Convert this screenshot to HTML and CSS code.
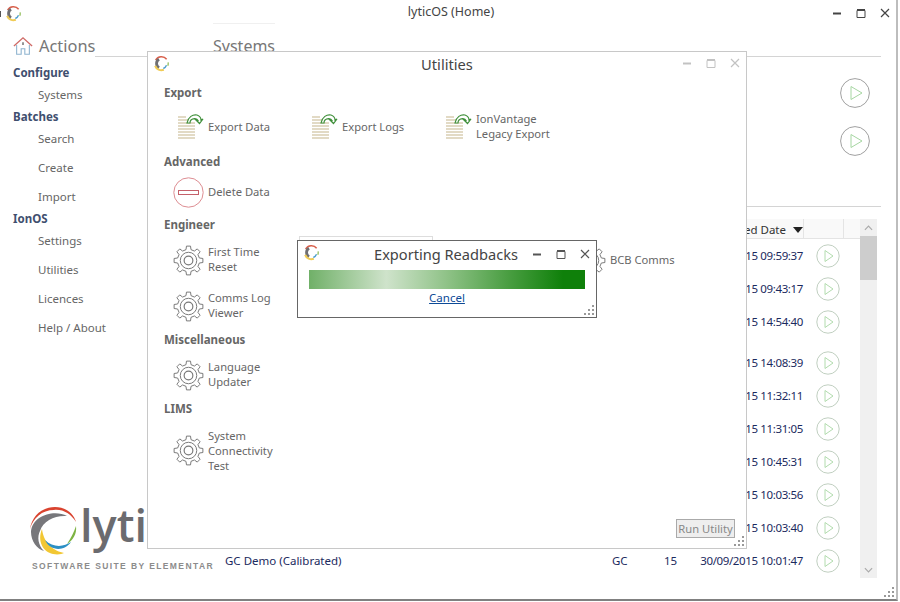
FILE: index.html
```html
<!DOCTYPE html>
<html lang="en">
<head>
<meta charset="utf-8">
<title>lyticOS (Home)</title>
<link rel="stylesheet" href="styles.css">
</head>
<body>
<svg class="defs" width="0" height="0" aria-hidden="true">
  <symbol id="logo" viewBox="0 0 48 48">
    <path fill="#d9432f" d="M1 22C3 8 14 0 26 0C37 0 45 7 47 15C42 7 34 2 25 3C13 3 4 11 1 22Z"/>
    <path fill="#77777b" d="M38 9C26 2 3 8 2 25C2 34 8 42 15 44C9 38 8 30 11 24C14 14 26 8 38 9Z"/>
    <path fill="#f2c733" d="M13 22C8 34 14 45 24 47C29 48 33 47 35 46C26 44 15 38 13 22Z"/>
    <path fill="#2b8fc4" d="M16 33C21 44 35 45 42 35C35 40 24 41 16 33Z"/>
    <path fill="#7db343" d="M47 19C48 27 44 33 38 37C42 31 45 25 47 19Z"/>
  </symbol>
  <symbol id="logo-s" viewBox="0 0 48 48">
    <g fill="none">
      <path stroke="#d8604c" stroke-width="4.5" d="M7.55 14.5A19 19 0 0 1 38.55 11.8"/>
      <path stroke="#6f6f72" stroke-width="8" d="M17 11.9A14 14 0 0 0 17 36.1"/>
      <path stroke="#f0cb55" stroke-width="6" d="M6.15 30.5A19 19 0 0 0 30.5 41.85"/>
      <path stroke="#4d9fcc" stroke-width="4" d="M29.1 38.1A15 15 0 0 0 38.1 29.1"/>
      <path stroke="#8dbb55" stroke-width="3.5" d="M41.85 30.5A19 19 0 0 0 42.7 20.7"/>
    </g>
  </symbol>
  <symbol id="gear" viewBox="0 0 32 32">
    <path fill="none" stroke="#777" stroke-width="1" d="M13.41 4.8L13.91 1.15H18.09L18.59 4.8L22.09 6.25L25.03 4.02L27.98 6.97L25.75 9.91L27.2 13.41L30.85 13.91V18.09L27.2 18.59L25.75 22.09L27.98 25.03L25.03 27.98L22.09 25.75L18.59 27.2L18.09 30.85H13.91L13.41 27.2L9.91 25.75L6.97 27.98L4.02 25.03L6.25 22.09L4.8 18.59L1.15 18.09V13.91L4.8 13.41L6.25 9.91L4.02 6.97L6.97 4.02L9.91 6.25Z"/>
    <circle cx="16" cy="16" r="8.5" fill="none" stroke="#777"/>
    <circle cx="16" cy="16" r="4.5" fill="none" stroke="#777" stroke-width="1.2"/>
  </symbol>
  <symbol id="doc" viewBox="0 0 27 26">
    <path stroke="#d9ceb2" stroke-width="1.4" d="M1 3H9M1 6H11M1 9H18M1 12H18M1 15H18M1 18H18M1 21H18M1 24H18"/>
    <path fill="#fff" stroke="#3f8f3a" stroke-width="1.2" d="M10 9C11 3 16 0 20 1C23 2 24 4 24 6L26 5L22.5 9.5L19 6L21 6.5C20 4 16 4 14 6C13 7 13 8 13 9Z"/>
  </symbol>
  <symbol id="grip" viewBox="0 0 11 11">
    <path fill="#999" d="M8 0h2v2H8zM4 4h2v2H4zM8 4h2v2H8zM0 8h2v2H0zM4 8h2v2H4zM8 8h2v2H8z"/>
  </symbol>
  <symbol id="play" viewBox="0 0 30 30">
    <circle cx="15" cy="15" r="14.4" fill="none" stroke="#a0a0a0"/>
    <path fill="none" stroke="#a6d6a2" d="M11 8.5L22 15L11 21.5Z"/>
  </symbol>
  <symbol id="playsm" viewBox="0 0 24 24">
    <circle cx="12" cy="12" r="11.2" fill="none" stroke="#c0cfc0"/>
    <path fill="none" stroke="#b2dcae" d="M9 6.5L17 12L9 17.5Z"/>
  </symbol>
  <symbol id="min" viewBox="0 0 10 10"><path d="M1 5.5H9" stroke="currentColor" stroke-width="2"/></symbol>
  <symbol id="max" viewBox="0 0 10 10"><path fill="none" stroke="currentColor" d="M1 2.5H9V9.5H1Z"/><path d="M1 1.5H9" stroke="currentColor"/></symbol>
  <symbol id="close" viewBox="0 0 10 10"><path fill="none" stroke="currentColor" stroke-width="1.2" d="M1 1L9 9M9 1L1 9"/></symbol>
</svg>

<div class="main">
  <header class="main-title">
    <span class="tick"></span>
    <svg class="logo-sm"><use href="#logo-s"/></svg>
    <h1>lyticOS (Home)</h1>
    <div class="controls main-controls">
      <svg><use href="#min"/></svg><svg><use href="#max"/></svg><svg><use href="#close"/></svg>
    </div>
  </header>
  <div class="main-body">
    <aside class="sidebar">
      <div class="actions-head">
        <svg class="home" viewBox="0 0 22 22">
          <path fill="none" stroke="#8fb4cf" stroke-width="1.2" d="M4 10V20H9V14H13V20H18V10"/>
          <path fill="none" stroke="#cf6a66" stroke-width="1.5" d="M1 11L11 2L21 11"/>
          <path fill="#8a8a8a" d="M10 7h2v3h-2z"/>
        </svg>
        <span class="actions-label">Actions</span>
        <span class="actions-rule"></span>
      </div>
      <nav class="nav">
        <div class="nav-group">Configure</div>
        <a class="nav-link">Systems</a>
        <div class="nav-group">Batches</div>
        <a class="nav-link">Search</a>
        <a class="nav-link">Create</a>
        <a class="nav-link">Import</a>
        <div class="nav-group">IonOS</div>
        <a class="nav-link">Settings</a>
        <a class="nav-link">Utilities</a>
        <a class="nav-link">Licences</a>
        <a class="nav-link">Help / About</a>
      </nav>
      <div class="brand">
        <div class="brand-row">
          <svg class="brand-logo"><use href="#logo"/></svg>
          <span class="brand-name">lyticOS</span>
        </div>
        <div class="brand-sub">SOFTWARE SUITE BY ELEMENTAR</div>
      </div>
    </aside>
    <section class="content">
      <div class="systems-head"><span class="systems-label">Systems</span></div>
      <div class="big-plays">
        <svg class="play-big"><use href="#play"/></svg>
        <svg class="play-big"><use href="#play"/></svg>
      </div>
      <div class="table-wrap">
        <div class="table">
          <div class="thead">
            <span></span><span></span><span></span>
            <span class="th-date">Created Date <i class="caret"></i></span>
            <span class="th-cell"></span><span></span>
          </div>
          <div class="row"><span></span><span></span><span></span><span class="date">30/09/2015 09:59:37</span><svg class="play-sm"><use href="#playsm"/></svg></div>
          <div class="row"><span></span><span></span><span></span><span class="date">30/09/2015 09:43:17</span><svg class="play-sm"><use href="#playsm"/></svg></div>
          <div class="row"><span></span><span></span><span></span><span class="date">29/09/2015 14:54:40</span><svg class="play-sm"><use href="#playsm"/></svg></div>
          <div class="row row-gap"><span></span><span></span><span></span><span class="date">29/09/2015 14:08:39</span><svg class="play-sm"><use href="#playsm"/></svg></div>
          <div class="row"><span></span><span></span><span></span><span class="date">30/09/2015 11:32:11</span><svg class="play-sm"><use href="#playsm"/></svg></div>
          <div class="row"><span></span><span></span><span></span><span class="date">30/09/2015 11:31:05</span><svg class="play-sm"><use href="#playsm"/></svg></div>
          <div class="row"><span></span><span></span><span></span><span class="date">30/09/2015 10:45:31</span><svg class="play-sm"><use href="#playsm"/></svg></div>
          <div class="row"><span></span><span></span><span></span><span class="date">30/09/2015 10:03:56</span><svg class="play-sm"><use href="#playsm"/></svg></div>
          <div class="row"><span></span><span></span><span></span><span class="date">30/09/2015 10:03:40</span><svg class="play-sm"><use href="#playsm"/></svg></div>
          <div class="row"><span>GC Demo (Calibrated)</span><span>GC</span><span>15</span><span class="date">30/09/2015 10:01:47</span><svg class="play-sm"><use href="#playsm"/></svg></div>
        </div>
        <div class="scrollbar">
          <svg class="arrow" viewBox="0 0 10 6"><path fill="none" stroke="#aaa" stroke-width="1.3" d="M1 5L5 1L9 5"/></svg>
          <div class="thumb"></div>
          <svg class="arrow arrow-down" viewBox="0 0 10 6"><path fill="none" stroke="#aaa" stroke-width="1.3" d="M1 1L5 5L9 1"/></svg>
        </div>
      </div>
    </section>
  </div>
  <svg class="grip"><use href="#grip"/></svg>
</div>

<div class="window utilities">
  <header class="util-title">
    <svg class="logo-sm"><use href="#logo-s"/></svg>
    <h2>Utilities</h2>
    <div class="controls util-controls">
      <svg><use href="#min"/></svg><svg><use href="#max"/></svg><svg><use href="#close"/></svg>
    </div>
  </header>
  <div class="util-body">
    <h3 class="h3-low">Export</h3>
    <div class="items">
      <div class="item"><svg class="doc"><use href="#doc"/></svg><span>Export Data</span></div>
      <div class="item"><svg class="doc"><use href="#doc"/></svg><span>Export Logs</span></div>
      <div class="item"><svg class="doc"><use href="#doc"/></svg><span>IonVantage<br>Legacy Export</span></div>
    </div>
    <h3 class="h3-low">Advanced</h3>
    <div class="items items-tight">
      <div class="item item-short">
        <svg class="icon" viewBox="0 0 31 31">
          <circle cx="15.5" cy="15.5" r="14.7" fill="none" stroke="#dd8d92"/>
          <rect x="5.5" y="13.5" width="20" height="4" fill="#fff" stroke="#c4606a"/>
        </svg>
        <span>Delete Data</span>
      </div>
    </div>
    <h3>Engineer</h3>
    <div class="items">
      <div class="item"><svg class="icon"><use href="#gear"/></svg><span>First Time<br>Reset</span></div>
      <div></div><div></div>
      <div class="item"><svg class="icon"><use href="#gear"/></svg><span>BCB Comms</span></div>
      <div class="item"><svg class="icon"><use href="#gear"/></svg><span>Comms Log<br>Viewer</span></div>
    </div>
    <h3>Miscellaneous</h3>
    <div class="items">
      <div class="item"><svg class="icon"><use href="#gear"/></svg><span>Language<br>Updater</span></div>
    </div>
    <h3>LIMS</h3>
    <div class="items">
      <div class="item item-tall"><svg class="icon"><use href="#gear"/></svg><span>System<br>Connectivity<br>Test</span></div>
    </div>
  </div>
  <div class="util-foot"><button class="run" type="button">Run Utility</button></div>
  <svg class="grip"><use href="#grip"/></svg>
</div>

<div class="ghost"><span class="ghost-handle"></span></div>

<div class="window dialog">
  <header class="dialog-title">
    <svg class="logo-sm"><use href="#logo-s"/></svg>
    <h2>Exporting Readbacks</h2>
    <div class="controls dialog-controls">
      <svg><use href="#min"/></svg><svg><use href="#max"/></svg><svg><use href="#close"/></svg>
    </div>
  </header>
  <div class="progress"></div>
  <a class="cancel" href="#">Cancel</a>
  <svg class="grip"><use href="#grip"/></svg>
</div>
</body>
</html>
```
FILE: styles.css
```css
* { box-sizing: border-box; }
html, body { margin: 0; padding: 0; height: 100%; background: #fff; overflow: hidden; }
body { font-family: "Noto Sans", "Open Sans", sans-serif; font-size: 11.5px; color: #555; }
.defs { position: absolute; }
h1, h2, h3 { margin: 0; font-weight: 400; }

.main { position: relative; width: 898px; height: 601px; border-right: 2px solid #bdbdbd; border-bottom: 2px solid #808080; display: flex; flex-direction: column; }
.main > .grip { position: absolute; right: 1px; bottom: 1px; }
.grip { width: 11px; height: 11px; }

.main-title { height: 23px; position: relative; flex: none; }
.main-title h1 { position: absolute; left: 0; right: 0; top: 3px; padding-left: 6px; text-align: center; font-size: 12.5px; line-height: 18px; color: #444; }
.tick { position: absolute; left: 0; top: 11px; width: 1px; height: 6px; background: #555; }
.logo-sm { position: absolute; width: 17px; height: 17px; }
.main-title .logo-sm { left: 5px; top: 5px; }

.controls { position: absolute; display: flex; }
.controls svg { width: 10px; height: 10px; }
.main-controls { right: 6px; top: 8px; gap: 14px; color: #444; }
.util-controls { right: 6px; top: 6px; gap: 14px; color: #c2c2c2; }
.dialog-controls { right: 6px; top: 8px; gap: 14px; color: #555; }

.main-body { flex: 1; display: flex; min-height: 0; }
.sidebar { width: 213px; flex: none; display: flex; flex-direction: column; }
.actions-head { height: 34px; display: flex; align-items: flex-end; padding-left: 13px; }
.home { width: 20px; height: 20px; margin-bottom: 1px; }
.actions-label { margin-left: 6px; font-size: 16.4px; line-height: 22px; color: #777; }
.actions-rule { flex: 1; border-bottom: 1px solid #d4d4d4; }
.nav { margin-top: 5px; }
.nav-group { height: 22px; line-height: 22px; padding-left: 13px; font-weight: 700; font-size: 11.5px; color: #3f4f6f; }
.nav-link { display: block; height: 22px; line-height: 22px; padding-left: 38px; color: #666; }
.nav-link + .nav-link { margin-top: 7px; }

.brand { margin-top: auto; padding: 0 0 28px 29px; }
.brand-row { display: flex; align-items: flex-start; height: 48px; white-space: nowrap; }
.brand-logo { width: 48px; height: 48px; flex: none; }
.brand-name { margin: -6px 0 0 3px; font-family: "Open Sans", sans-serif; font-weight: 600; font-size: 45px; line-height: 48px; color: #6b6b6f; }
.brand-sub { margin: 6px 0 0 3px; font-family: "Liberation Sans", sans-serif; font-weight: 700; font-size: 8.5px; letter-spacing: 1.4px; line-height: 10px; color: #8c8c8c; white-space: nowrap; }

.content { width: 668px; display: flex; flex-direction: column; }
.systems-head { height: 34px; border-bottom: 1px solid #d4d4d4; }
.systems-label { display: block; width: 62px; height: 34px; border-top: 1px solid #f0f0f0; font-size: 16px; line-height: 44px; color: #777; }
.big-plays { height: 150px; padding: 21px 11px 0 0; display: flex; flex-direction: column; align-items: flex-end; gap: 18px; border-bottom: 1px solid #d4d4d4; }
.play-big { width: 30px; height: 30px; flex: none; }

.table-wrap { display: flex; margin-top: 12px; height: 359px; }
.table { width: 647px; flex: none; }
.thead, .row { display: grid; grid-template-columns: 399px 52px 36px 103px 41px 16px; align-items: center; }
.thead { height: 20px; background: #f9f9f9; border-bottom: 1px solid #e4e4e4; color: #333; }
.th-date { padding-top: 1px; white-space: nowrap; text-align: right; }
.th-cell { height: 100%; border-left: 1px solid #e4e4e4; border-right: 1px solid #e4e4e4; }
.caret { display: inline-block; margin-left: 4px; border: 5px solid transparent; border-top: 6px solid #222; border-bottom: 0; vertical-align: 1px; }
.row { height: 33px; color: #1b2a5e; }
.row > span:first-child { padding-left: 12px; }
.row-gap { margin-top: 8px; }
.date { text-align: right; white-space: nowrap; letter-spacing: -0.37px; }
.play-sm { width: 24px; height: 24px; justify-self: end; margin-right: 4px; grid-column: 5; }

.scrollbar { width: 17px; background: #f0f0f0; display: flex; flex-direction: column; align-items: center; }
.arrow { width: 9px; height: 6px; margin: 6px 0 5px; flex: none; }
.arrow-down { margin: auto 0 5px; }
.thumb { width: 100%; height: 44px; background: #cdcdcd; }

.window { position: absolute; background: #fff; }
.window > .grip { position: absolute; right: 1px; bottom: 1px; }
.utilities { left: 147px; top: 51px; width: 600px; height: 498px; border: 1px solid #c8c8c8; display: flex; flex-direction: column; }
.util-title { position: relative; height: 32px; flex: none; }
.util-title .logo-sm { left: 5px; top: 3px; }
.util-title h2 { text-align: center; font-size: 14.7px; line-height: 24px; color: #444; }
.util-body { padding-left: 16px; }
.util-body h3 { height: 16px; margin-top: 6px; line-height: 16px; font-size: 11.5px; font-weight: 700; color: #666; }
.util-body h3:first-child { margin-top: 0; }
.util-body .h3-low { line-height: 18px; }
.items { display: grid; grid-template-columns: repeat(4, 134px); row-gap: 6px; margin: 7px 0 0 9px; }
.items-tight { margin-top: 4px; }
.item { display: flex; align-items: center; gap: 4px; min-height: 40px; font-size: 11.2px; line-height: 15px; color: #666; white-space: nowrap; }
.item > span { padding-bottom: 2px; }
.item-short { min-height: 38px; }
.item-tall { min-height: 53px; }
.item-tall > span { padding-bottom: 0; }
.icon { width: 31px; height: 31px; flex: none; }
.doc { width: 27px; height: 26px; margin-left: 4px; flex: none; }
.util-foot { margin-top: auto; padding: 0 11px 10px 0; display: flex; justify-content: flex-end; }
.run { width: 59px; height: 19px; padding: 0; background: #eee; border: 1px solid #aaa; font: inherit; font-size: 11.2px; line-height: 16px; color: #888; }

.ghost { position: absolute; left: 299px; top: 236px; width: 134px; height: 80px; background: #fff; border: 1px solid #ddd; }
.ghost-handle { position: absolute; left: 21px; bottom: -3px; width: 4px; height: 4px; background: #fff; border: 1px solid #888; }

.dialog { left: 297px; top: 240px; width: 300px; height: 78px; border: 1px solid #666; }
.dialog-title { position: relative; height: 29px; }
.dialog-title .logo-sm { left: 5px; top: 3px; }
.dialog-title h2 { text-align: center; padding-right: 2px; font-size: 14.6px; line-height: 27px; color: #444; }
.progress { height: 19px; margin: 0 11px; background: linear-gradient(90deg, #70b068 0%, #cfe3cb 28%, #8fc287 50%, #4a9e42 72%, #0f800a 92%, #0f800a 100%); }
.cancel { display: block; margin-top: 1px; text-align: center; line-height: 16px; color: #0d4a96; }
```
